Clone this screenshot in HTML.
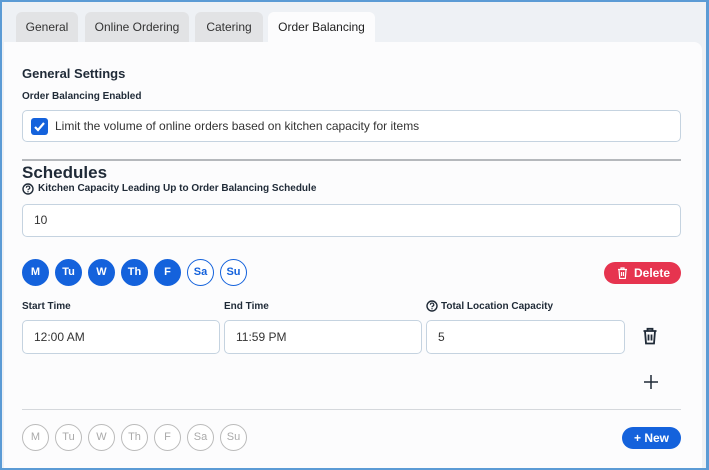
<!DOCTYPE html>
<html><head><style>
*{box-sizing:border-box;margin:0;padding:0}
body{width:709px;height:470px;overflow:hidden;font-family:"Liberation Sans",sans-serif;color:#1f2a37}
.frame{position:absolute;left:0;top:0;width:709px;height:470px;border:2px solid #5b9bd5;border-right-width:3px;background:#eef1f5}
.a{position:absolute}
.tab{position:absolute;top:12px;height:31px;background:#e2e3e5;border-radius:6px 6px 0 0;font-size:12px;color:#333;text-align:center;line-height:31px}
.panel{position:absolute;left:4px;top:42px;width:698px;height:426px;background:#fcfcfd;border-radius:0 8px 0 0}
.inp{position:absolute;background:#fff;border:1px solid #c5d3e0;border-radius:5px;font-size:12px;color:#333;padding-left:11px}
.day{position:absolute;width:27px;height:27px;border-radius:50%;font-size:11px;font-weight:bold;text-align:center;line-height:25px}
.on{background:#1462dc;color:#fff;border:1px solid #1462dc}
.off{background:#fff;color:#1462dc;border:1.5px solid #1462dc}
.dis{background:#fff;color:#aaa;border:1.5px solid #bbb;font-weight:normal}
.lbl{position:absolute;font-size:10px;font-weight:bold;color:#1f2a37}
</style></head><body>
<div class="frame"></div>
<div class="tab" style="left:16px;width:62px">General</div>
<div class="tab" style="left:85px;width:104px">Online Ordering</div>
<div class="tab" style="left:195px;width:68px">Catering</div>
<div class="tab" style="left:268px;width:107px;background:#fcfcfd;color:#222">Order Balancing</div>
<div class="panel"></div>
<div class="a" style="left:22px;top:66px;font-size:13px;font-weight:bold">General Settings</div>
<div class="lbl" style="left:22px;top:91px">Order Balancing Enabled</div>
<div class="inp" style="left:22px;top:110px;width:659px;height:32px">
<div class="a" style="left:8px;top:7px;width:17px;height:17px;background:#1462dc;border-radius:3px"><svg width="17" height="17"><path d="M4 9l3 3 6-7" stroke="#fff" stroke-width="2.2" fill="none"/></svg></div>
<div class="a" style="left:32px;top:8px;font-size:12px;color:#333">Limit the volume of online orders based on kitchen capacity for items</div></div>
<div class="a" style="left:22px;top:159px;width:659px;height:2px;background:#b5b8bc"></div>
<div class="a" style="left:22px;top:163px;font-size:17px;font-weight:bold">Schedules</div>
<svg class="a" style="left:22px;top:183px" width="12" height="12"><circle cx="6" cy="6" r="5" fill="none" stroke="#1f2a37" stroke-width="1.4"/><path d="M4.4 4.7a1.7 1.6 0 1 1 2.2 1.5c-.5.2-.6.5-.6 1" stroke="#1f2a37" stroke-width="1.2" fill="none"/><circle cx="6" cy="8.8" r=".7" fill="#1f2a37"/></svg>
<div class="lbl" style="left:38px;top:183px">Kitchen Capacity Leading Up to Order Balancing Schedule</div>
<div class="inp" style="left:22px;top:204px;width:659px;height:33px;line-height:31px">10</div>
<div class="day on" style="left:22px;top:259px">M</div>
<div class="day on" style="left:55px;top:259px">Tu</div>
<div class="day on" style="left:88px;top:259px">W</div>
<div class="day on" style="left:121px;top:259px">Th</div>
<div class="day on" style="left:154px;top:259px">F</div>
<div class="day off" style="left:187px;top:259px">Sa</div>
<div class="day off" style="left:220px;top:259px">Su</div>
<div class="a" style="left:604px;top:262px;width:77px;height:22px;border-radius:11px;background:#e6344f;color:#fff;font-size:12px;font-weight:bold;line-height:22px;padding-left:30px">Delete
<svg class="a" style="left:13px;top:5px" width="11" height="12"><path d="M1 2.5h9M4 2.5V1h3v1.5M2 2.5l.7 9h5.6l.7-9M4.5 5v4M6.5 5v4" stroke="#fff" stroke-width="1.2" fill="none"/></svg></div>
<div class="lbl" style="left:22px;top:301px">Start Time</div>
<div class="lbl" style="left:224px;top:301px">End Time</div>
<svg class="a" style="left:426px;top:300px" width="12" height="12"><circle cx="6" cy="6" r="5" fill="none" stroke="#1f2a37" stroke-width="1.4"/><path d="M4.4 4.7a1.7 1.6 0 1 1 2.2 1.5c-.5.2-.6.5-.6 1" stroke="#1f2a37" stroke-width="1.2" fill="none"/><circle cx="6" cy="8.8" r=".7" fill="#1f2a37"/></svg>
<div class="lbl" style="left:441px;top:301px">Total Location Capacity</div>
<div class="inp" style="left:22px;top:320px;width:198px;height:34px;line-height:32px">12:00 AM</div>
<div class="inp" style="left:224px;top:320px;width:198px;height:34px;line-height:32px">11:59 PM</div>
<div class="inp" style="left:426px;top:320px;width:199px;height:34px;line-height:32px">5</div>
<svg class="a" style="left:642px;top:327px" width="16" height="18"><path d="M1.5 4h13M5.5 4V1.8h5V4M3 4l1 12.5h8L13 4M6.5 7.5v6M9.5 7.5v6" stroke="#1f2a37" stroke-width="1.8" fill="none"/></svg>
<svg class="a" style="left:644px;top:375px" width="14" height="14"><path d="M7 0v14M0 7h14" stroke="#1f2a37" stroke-width="1.5"/></svg>
<div class="a" style="left:22px;top:409px;width:659px;height:1px;background:#d5d8dc"></div>
<div class="day dis" style="left:22px;top:424px">M</div>
<div class="day dis" style="left:55px;top:424px">Tu</div>
<div class="day dis" style="left:88px;top:424px">W</div>
<div class="day dis" style="left:121px;top:424px">Th</div>
<div class="day dis" style="left:154px;top:424px">F</div>
<div class="day dis" style="left:187px;top:424px">Sa</div>
<div class="day dis" style="left:220px;top:424px">Su</div>
<div class="a" style="left:622px;top:427px;width:59px;height:22px;border-radius:11px;background:#1462dc;color:#fff;font-size:12px;font-weight:bold;line-height:22px;text-align:center">+ New</div>
</body></html>
